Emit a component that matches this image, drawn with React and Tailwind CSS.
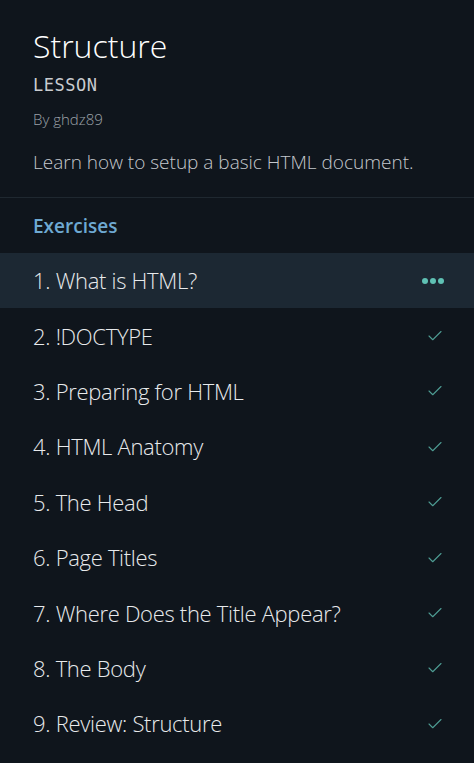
import { Check } from "lucide-react";

const exercises = [
  { id: 1, title: "What is HTML?", active: true },
  { id: 2, title: "!DOCTYPE" },
  { id: 3, title: "Preparing for HTML" },
  { id: 4, title: "HTML Anatomy" },
  { id: 5, title: "The Head" },
  { id: 6, title: "Page Titles" },
  { id: 7, title: "Where Does the Title Appear?" },
  { id: 8, title: "The Body" },
  { id: 9, title: "Review: Structure" },
];

export default function App() {
  return (
    <div className="min-h-[763px] w-full bg-[#0f151c] text-[#e8eaec] font-['Open_Sans',sans-serif] overflow-hidden">
      {/* Header */}
      <div className="px-[33px] pt-[26px] pb-[22px] border-b border-[#1f2830]">
        <h1 className="text-[32px] font-light leading-[40px] text-white">Structure</h1>
        <p className="mt-[8px] text-[17px] leading-[22px] text-[#c9ccd0] font-['DejaVu_Sans_Mono',monospace] tracking-[0.5px]">
          LESSON
        </p>
        <p className="mt-[13px] text-[15px] font-light leading-[20px] text-[#9ba1a8]">By ghdz89</p>
        <p className="mt-[20px] text-[19px] font-light leading-[26px] text-[#c4c8cd]">
          Learn how to setup a basic HTML document.
        </p>
      </div>

      {/* Exercises */}
      <div className="px-[33px] pt-[16px] pb-[14px]">
        <h2 className="text-[19px] font-semibold leading-[25px] text-[#6ea9d2]">Exercises</h2>
      </div>

      <ul>
        {exercises.map((item) => (
          <li
            key={item.id}
            className={
              item.active
                ? "flex h-[55.4px] items-center justify-between bg-[#1c2833] pl-[33px] pr-[30px]"
                : "flex h-[55.4px] items-center justify-between pl-[33px] pr-[30px]"
            }
          >
            <span className="text-[22px] font-light tracking-[-0.3px]">
              {item.id}. {item.title}
            </span>
            {item.active ? (
              <span className="flex gap-[2px]">
                <span className="h-[6px] w-[6px] rounded-full bg-[#5fc1b4]" />
                <span className="h-[6px] w-[6px] rounded-full bg-[#5fc1b4]" />
                <span className="h-[6px] w-[6px] rounded-full bg-[#5fc1b4]" />
              </span>
            ) : (
              <Check className="h-[18px] w-[18px] text-[#4e9c92]" strokeWidth={1.5} />
            )}
          </li>
        ))}
      </ul>
    </div>
  );
}
